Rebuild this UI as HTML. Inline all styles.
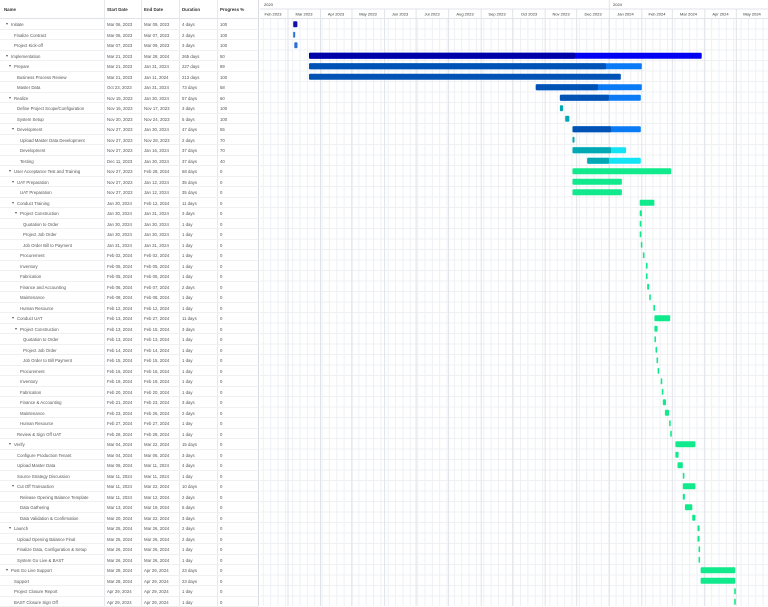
<!DOCTYPE html>
<html><head><meta charset="utf-8">
<style>
*{margin:0;padding:0;box-sizing:border-box}
body{width:768px;height:606px;overflow:hidden;background:#fff;font-family:"Liberation Sans",sans-serif;position:relative}
#tbl{position:absolute;left:0;top:0;width:259px;height:606px;border-right:1px solid #d9dde3}
.hd{position:absolute;left:0;top:0;width:258px;height:19px;border-bottom:1px solid #dfe2e7}
.hd span{position:absolute;top:7px;font-size:4.4px;color:#333;font-weight:bold}
.vl{position:absolute;top:0;width:1px;height:606px;background:#e6e8ec}
#rows{position:absolute;left:0;top:19px;width:258px}
.r{position:relative;height:10.5px;border-bottom:1px solid #eef0f3;font-size:4.3px;color:#555;white-space:nowrap}
.r span{position:absolute;top:3.2px}
.r span:nth-child(2){left:107px}.r span:nth-child(3){left:144px}.r span:nth-child(4){left:182px}.r span:nth-child(5){left:220px}
.l0{left:11px}.l1{left:14px}.l2{left:17px}.l3{left:20px}.l4{left:23px}
.s::before{content:"";position:absolute;left:-5px;top:1.3px;border-top:2px solid #555;border-left:1.5px solid transparent;border-right:1.5px solid transparent}
</style></head><body>
<svg width="768" height="606" style="position:absolute;left:0;top:0" xmlns="http://www.w3.org/2000/svg">
<defs>
<pattern id="wk" x="262.8" y="0" width="7.35" height="10.5" patternUnits="userSpaceOnUse">
<line x1="0.5" y1="0" x2="0.5" y2="10.5" stroke="#eef0f3" stroke-width="1"/>
</pattern>
<pattern id="hr" x="0" y="19" width="10" height="10.5" patternUnits="userSpaceOnUse">
<line x1="0" y1="10" x2="10" y2="10" stroke="#eef0f3" stroke-width="1"/>
</pattern>
</defs>
<rect x="260" y="19" width="508" height="587" fill="url(#wk)"/>
<rect x="260" y="19" width="508" height="587" fill="url(#hr)"/>
<g stroke="#e0e3e8" stroke-width="1">
<line x1="288" y1="9" x2="288" y2="606"/><line x1="320.5" y1="9" x2="320.5" y2="606"/><line x1="352" y1="9" x2="352" y2="606"/><line x1="384.6" y1="9" x2="384.6" y2="606"/><line x1="416.1" y1="9" x2="416.1" y2="606"/><line x1="448.6" y1="9" x2="448.6" y2="606"/><line x1="481.2" y1="9" x2="481.2" y2="606"/><line x1="512.7" y1="9" x2="512.7" y2="606"/><line x1="545.2" y1="9" x2="545.2" y2="606"/><line x1="576.7" y1="9" x2="576.7" y2="606"/><line x1="609.3" y1="0" x2="609.3" y2="606"/><line x1="641.8" y1="9" x2="641.8" y2="606"/><line x1="672.3" y1="9" x2="672.3" y2="606"/><line x1="704.8" y1="9" x2="704.8" y2="606"/><line x1="736.3" y1="9" x2="736.3" y2="606"/>
<line x1="260" y1="9" x2="768" y2="9"/><line x1="260" y1="18.5" x2="768" y2="18.5"/>
</g>
<rect x="260" y="9.5" width="508" height="9" fill="#fff" opacity="0"/>
<g font-family="Liberation Sans, sans-serif" font-size="4" fill="#333" text-anchor="middle">
<text x="273" y="15.5">Feb 2023</text><text x="304" y="15.5">Mar 2023</text><text x="336" y="15.5">Apr 2023</text><text x="368" y="15.5">May 2023</text><text x="400" y="15.5">Jun 2023</text><text x="432" y="15.5">Jul 2023</text><text x="465" y="15.5">Aug 2023</text><text x="497" y="15.5">Sep 2023</text><text x="529" y="15.5">Oct 2023</text><text x="561" y="15.5">Nov 2023</text><text x="593" y="15.5">Dec 2023</text><text x="625.5" y="15.5">Jan 2024</text><text x="657" y="15.5">Feb 2024</text><text x="688.5" y="15.5">Mar 2024</text><text x="720.5" y="15.5">Apr 2024</text><text x="752" y="15.5">May 2024</text>
</g>
<g font-family="Liberation Sans, sans-serif" font-size="4" fill="#333">
<text x="264" y="6">2023</text><text x="613" y="6">2024</text>
</g>
<g>
<rect x="293.2" y="21.3" width="4.2" height="6" rx="1" fill="#1212aa"/>
<rect x="293.2" y="31.8" width="2" height="6" rx="1" fill="#2d6fd2"/>
<rect x="294.3" y="42.3" width="3.2" height="6" rx="1" fill="#2d6fd2"/>
<rect x="309" y="52.8" width="392.7" height="6" rx="1" fill="#0000f2"/><rect x="309" y="52.8" width="266" height="6" rx="1" fill="#0000a8"/>
<rect x="309" y="63.3" width="332.8" height="6" rx="1" fill="#0a7af5"/><rect x="309" y="63.3" width="297" height="6" rx="1" fill="#0052b5"/>
<rect x="309" y="73.8" width="311.8" height="6" rx="1" fill="#0052b5"/>
<rect x="535.8" y="84.3" width="106" height="6" rx="1" fill="#0a7af5"/><rect x="535.8" y="84.3" width="62.2" height="6" rx="1" fill="#0052b5"/>
<rect x="559.9" y="94.8" width="80.9" height="6" rx="1" fill="#0a7af5"/><rect x="559.9" y="94.8" width="49" height="6" rx="1" fill="#0052b5"/>
<rect x="559.9" y="105.3" width="3.2" height="6" rx="1" fill="#00a8b4"/>
<rect x="565.2" y="115.8" width="4.2" height="6" rx="1" fill="#00a8b4"/>
<rect x="572.5" y="126.3" width="68.3" height="6" rx="1" fill="#0a7af5"/><rect x="572.5" y="126.3" width="38.5" height="6" rx="1" fill="#0052b5"/>
<rect x="572.5" y="136.8" width="2" height="6" rx="1" fill="#00a8b4"/>
<rect x="572.5" y="147.3" width="53.6" height="6" rx="1" fill="#12e4f6"/><rect x="572.5" y="147.3" width="38.5" height="6" rx="1" fill="#00a8b4"/>
<rect x="587.2" y="157.8" width="53.6" height="6" rx="1" fill="#12e4f6"/><rect x="587.2" y="157.8" width="21.8" height="6" rx="1" fill="#00a8b4"/>
</g>
<g fill="#10ea8c">
<rect x="572.5" y="168.3" width="98.7" height="6" rx="1"/>
<rect x="572.5" y="178.8" width="49.4" height="6" rx="1"/>
<rect x="572.5" y="189.3" width="49.4" height="6" rx="1"/>
<rect x="639.7" y="199.8" width="14.7" height="6" rx="1"/>
<rect x="639.7" y="210.3" width="2.1" height="6" rx="1"/>
<rect x="639.7" y="220.8" width="1.6" height="6" rx="0.8"/>
<rect x="639.7" y="231.3" width="1.6" height="6" rx="0.8"/>
<rect x="640.8" y="241.8" width="1.6" height="6" rx="0.8"/>
<rect x="642.9" y="252.3" width="1.6" height="6" rx="0.8"/>
<rect x="646" y="262.8" width="1.6" height="6" rx="0.8"/>
<rect x="646" y="273.3" width="1.6" height="6" rx="0.8"/>
<rect x="647.1" y="283.8" width="2.1" height="6" rx="1"/>
<rect x="649.2" y="294.3" width="1.6" height="6" rx="0.8"/>
<rect x="653.4" y="304.8" width="1.6" height="6" rx="0.8"/>
<rect x="654.4" y="315.3" width="15.8" height="6" rx="1"/>
<rect x="654.4" y="325.8" width="3.2" height="6" rx="1"/>
<rect x="654.4" y="336.3" width="1.6" height="6" rx="0.8"/>
<rect x="655.5" y="346.8" width="1.6" height="6" rx="0.8"/>
<rect x="656.5" y="357.3" width="1.6" height="6" rx="0.8"/>
<rect x="657.6" y="367.8" width="1.6" height="6" rx="0.8"/>
<rect x="660.7" y="378.3" width="1.6" height="6" rx="0.8"/>
<rect x="661.8" y="388.8" width="1.6" height="6" rx="0.8"/>
<rect x="662.8" y="399.3" width="3.2" height="6" rx="1"/>
<rect x="664.9" y="409.8" width="4.2" height="6" rx="1"/>
<rect x="669.1" y="420.3" width="1.6" height="6" rx="0.8"/>
<rect x="670.2" y="430.8" width="1.6" height="6" rx="0.8"/>
<rect x="675.4" y="441.3" width="20" height="6" rx="1"/>
<rect x="675.4" y="451.8" width="3.2" height="6" rx="1"/>
<rect x="677.5" y="462.3" width="5.3" height="6" rx="1"/>
<rect x="682.8" y="472.8" width="1.6" height="6" rx="0.8"/>
<rect x="682.8" y="483.3" width="12.6" height="6" rx="1"/>
<rect x="682.8" y="493.8" width="2.1" height="6" rx="1"/>
<rect x="684.9" y="504.3" width="7.4" height="6" rx="1"/>
<rect x="692.2" y="514.8" width="3.2" height="6" rx="1"/>
<rect x="697.5" y="525.3" width="2.1" height="6" rx="1"/>
<rect x="697.5" y="535.8" width="2.1" height="6" rx="1"/>
<rect x="698.5" y="546.3" width="1.6" height="6" rx="0.8"/>
<rect x="698.5" y="556.8" width="1.6" height="6" rx="0.8"/>
<rect x="700.6" y="567.3" width="34.7" height="6" rx="1"/>
<rect x="700.6" y="577.8" width="34.7" height="6" rx="1"/>
<rect x="734.2" y="588.3" width="1.6" height="6" rx="0.8"/>
<rect x="734.2" y="598.8" width="1.6" height="6" rx="0.8"/>
</g>
</svg>
<div id="tbl">
<div class="vl" style="left:104px"></div><div class="vl" style="left:141px"></div><div class="vl" style="left:179px"></div><div class="vl" style="left:217px"></div>
<div class="hd"><span style="left:4px">Name</span><span style="left:107px">Start Date</span><span style="left:144px">End Date</span><span style="left:182px">Duration</span><span style="left:220px">Progress %</span></div>
<div id="rows">
<div class="r"><span class="l0 s">Initiate</span><span>Mar 06, 2023</span><span>Mar 09, 2023</span><span>4 days</span><span>100</span></div>
<div class="r"><span class="l1">Finalize Contract</span><span>Mar 06, 2023</span><span>Mar 07, 2023</span><span>2 days</span><span>100</span></div>
<div class="r"><span class="l1">Project Kick-off</span><span>Mar 07, 2023</span><span>Mar 09, 2023</span><span>3 days</span><span>100</span></div>
<div class="r"><span class="l0 s">Implementation</span><span>Mar 21, 2023</span><span>Mar 28, 2024</span><span>265 days</span><span>50</span></div>
<div class="r"><span class="l1 s">Prepare</span><span>Mar 21, 2023</span><span>Jan 31, 2024</span><span>227 days</span><span>89</span></div>
<div class="r"><span class="l2">Business Process Review</span><span>Mar 21, 2023</span><span>Jan 11, 2024</span><span>213 days</span><span>100</span></div>
<div class="r"><span class="l2">Master Data</span><span>Oct 23, 2023</span><span>Jan 31, 2024</span><span>73 days</span><span>58</span></div>
<div class="r"><span class="l1 s">Realize</span><span>Nov 15, 2023</span><span>Jan 30, 2024</span><span>57 days</span><span>60</span></div>
<div class="r"><span class="l2">Define Project Scope/Configuration</span><span>Nov 15, 2023</span><span>Nov 17, 2023</span><span>3 days</span><span>100</span></div>
<div class="r"><span class="l2">System Setup</span><span>Nov 20, 2023</span><span>Nov 24, 2023</span><span>5 days</span><span>100</span></div>
<div class="r"><span class="l2 s">Development</span><span>Nov 27, 2023</span><span>Jan 30, 2024</span><span>47 days</span><span>55</span></div>
<div class="r"><span class="l3">Upload Master Data Development</span><span>Nov 27, 2023</span><span>Nov 28, 2023</span><span>2 days</span><span>70</span></div>
<div class="r"><span class="l3">Development</span><span>Nov 27, 2023</span><span>Jan 16, 2024</span><span>37 days</span><span>70</span></div>
<div class="r"><span class="l3">Testing</span><span>Dec 11, 2023</span><span>Jan 30, 2024</span><span>37 days</span><span>40</span></div>
<div class="r"><span class="l1 s">User Acceptance Test and Training</span><span>Nov 27, 2023</span><span>Feb 28, 2024</span><span>68 days</span><span>0</span></div>
<div class="r"><span class="l2 s">UAT Preparation</span><span>Nov 27, 2023</span><span>Jan 12, 2024</span><span>35 days</span><span>0</span></div>
<div class="r"><span class="l3">UAT Preparation</span><span>Nov 27, 2023</span><span>Jan 12, 2024</span><span>35 days</span><span>0</span></div>
<div class="r"><span class="l2 s">Conduct Training</span><span>Jan 30, 2024</span><span>Feb 12, 2024</span><span>11 days</span><span>0</span></div>
<div class="r"><span class="l3 s">Project Construction</span><span>Jan 30, 2024</span><span>Jan 31, 2024</span><span>3 days</span><span>0</span></div>
<div class="r"><span class="l4">Quotation to Order</span><span>Jan 30, 2024</span><span>Jan 30, 2024</span><span>1 day</span><span>0</span></div>
<div class="r"><span class="l4">Project Job Order</span><span>Jan 30, 2024</span><span>Jan 30, 2024</span><span>1 day</span><span>0</span></div>
<div class="r"><span class="l4">Job Order Bill to Payment</span><span>Jan 31, 2024</span><span>Jan 31, 2024</span><span>1 day</span><span>0</span></div>
<div class="r"><span class="l3">Procurement</span><span>Feb 02, 2024</span><span>Feb 02, 2024</span><span>1 day</span><span>0</span></div>
<div class="r"><span class="l3">Inventory</span><span>Feb 05, 2024</span><span>Feb 05, 2024</span><span>1 day</span><span>0</span></div>
<div class="r"><span class="l3">Fabrication</span><span>Feb 05, 2024</span><span>Feb 05, 2024</span><span>1 day</span><span>0</span></div>
<div class="r"><span class="l3">Finance and Accounting</span><span>Feb 06, 2024</span><span>Feb 07, 2024</span><span>2 days</span><span>0</span></div>
<div class="r"><span class="l3">Maintenance</span><span>Feb 08, 2024</span><span>Feb 08, 2024</span><span>1 day</span><span>0</span></div>
<div class="r"><span class="l3">Human Resource</span><span>Feb 12, 2024</span><span>Feb 12, 2024</span><span>1 day</span><span>0</span></div>
<div class="r"><span class="l2 s">Conduct UAT</span><span>Feb 13, 2024</span><span>Feb 27, 2024</span><span>11 days</span><span>0</span></div>
<div class="r"><span class="l3 s">Project Construction</span><span>Feb 13, 2024</span><span>Feb 15, 2024</span><span>3 days</span><span>0</span></div>
<div class="r"><span class="l4">Quotation to Order</span><span>Feb 13, 2024</span><span>Feb 13, 2024</span><span>1 day</span><span>0</span></div>
<div class="r"><span class="l4">Project Job Order</span><span>Feb 14, 2024</span><span>Feb 14, 2024</span><span>1 day</span><span>0</span></div>
<div class="r"><span class="l4">Job Order to Bill Payment</span><span>Feb 15, 2024</span><span>Feb 15, 2024</span><span>1 day</span><span>0</span></div>
<div class="r"><span class="l3">Procurement</span><span>Feb 16, 2024</span><span>Feb 16, 2024</span><span>1 day</span><span>0</span></div>
<div class="r"><span class="l3">Inventory</span><span>Feb 19, 2024</span><span>Feb 19, 2024</span><span>1 day</span><span>0</span></div>
<div class="r"><span class="l3">Fabrication</span><span>Feb 20, 2024</span><span>Feb 20, 2024</span><span>1 day</span><span>0</span></div>
<div class="r"><span class="l3">Finance &amp; Accounting</span><span>Feb 21, 2024</span><span>Feb 23, 2024</span><span>3 days</span><span>0</span></div>
<div class="r"><span class="l3">Maintenance</span><span>Feb 23, 2024</span><span>Feb 26, 2024</span><span>2 days</span><span>0</span></div>
<div class="r"><span class="l3">Human Resource</span><span>Feb 27, 2024</span><span>Feb 27, 2024</span><span>1 day</span><span>0</span></div>
<div class="r"><span class="l2">Review &amp; Sign Off UAT</span><span>Feb 28, 2024</span><span>Feb 28, 2024</span><span>1 day</span><span>0</span></div>
<div class="r"><span class="l1 s">Verify</span><span>Mar 04, 2024</span><span>Mar 22, 2024</span><span>15 days</span><span>0</span></div>
<div class="r"><span class="l2">Configure Production Tenant</span><span>Mar 04, 2024</span><span>Mar 06, 2024</span><span>3 days</span><span>0</span></div>
<div class="r"><span class="l2">Upload Master Data</span><span>Mar 06, 2024</span><span>Mar 11, 2024</span><span>4 days</span><span>0</span></div>
<div class="r"><span class="l2">Source Strategy Discussion</span><span>Mar 11, 2024</span><span>Mar 11, 2024</span><span>1 day</span><span>0</span></div>
<div class="r"><span class="l2 s">Cut Off Transaction</span><span>Mar 11, 2024</span><span>Mar 22, 2024</span><span>10 days</span><span>0</span></div>
<div class="r"><span class="l3">Release Opening Balance Template</span><span>Mar 11, 2024</span><span>Mar 12, 2024</span><span>2 days</span><span>0</span></div>
<div class="r"><span class="l3">Data Gathering</span><span>Mar 13, 2024</span><span>Mar 19, 2024</span><span>5 days</span><span>0</span></div>
<div class="r"><span class="l3">Data Validation &amp; Confirmation</span><span>Mar 20, 2024</span><span>Mar 22, 2024</span><span>3 days</span><span>0</span></div>
<div class="r"><span class="l1 s">Launch</span><span>Mar 25, 2024</span><span>Mar 26, 2024</span><span>2 days</span><span>0</span></div>
<div class="r"><span class="l2">Upload Opening Balance Final</span><span>Mar 25, 2024</span><span>Mar 26, 2024</span><span>2 days</span><span>0</span></div>
<div class="r"><span class="l2">Finalize Data, Configuration &amp; Setup</span><span>Mar 26, 2024</span><span>Mar 26, 2024</span><span>1 day</span><span>0</span></div>
<div class="r"><span class="l2">System Go Live &amp; BAST</span><span>Mar 26, 2024</span><span>Mar 26, 2024</span><span>1 day</span><span>0</span></div>
<div class="r"><span class="l0 s">Post Go Live Support</span><span>Mar 28, 2024</span><span>Apr 29, 2024</span><span>23 days</span><span>0</span></div>
<div class="r"><span class="l1">Support</span><span>Mar 28, 2024</span><span>Apr 29, 2024</span><span>23 days</span><span>0</span></div>
<div class="r"><span class="l1">Project Closure Report</span><span>Apr 29, 2024</span><span>Apr 29, 2024</span><span>1 day</span><span>0</span></div>
<div class="r"><span class="l1">BAST Closure Sign Off</span><span>Apr 29, 2024</span><span>Apr 29, 2024</span><span>1 day</span><span>0</span></div>
</div>
</div>
</body></html>
